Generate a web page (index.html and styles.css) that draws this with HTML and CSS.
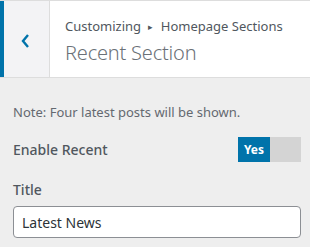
FILE: index.html
```html
<!DOCTYPE html>
<html lang="en">
  <head>
    <meta charset="UTF-8" />
    <title>Recent Section</title>
    <link rel="stylesheet" href="styles.css">
  </head>
  <body>
    <header class="section-head">
      <button class="back-btn" aria-label="Back">
        <svg width="10" height="16" viewBox="0 0 10 16">
          <polyline points="8,2 3,8 8,14" fill="none" stroke="#0073aa" stroke-width="2.4" />
        </svg>
      </button>
      <div class="section-title">
        <span class="crumb">Customizing <span class="sep">&#9656;</span> Homepage Sections</span>
        <h3>Recent Section</h3>
      </div>
    </header>

    <div class="controls">
      <p class="note">Note: Four latest posts will be shown.</p>

      <div class="row">
        <span class="label">Enable Recent</span>
        <div class="toggle">
          <span class="on">Yes</span>
          <span class="off"></span>
        </div>
      </div>

      <label class="label field-label" for="title">Title</label>
      <input id="title" class="text-input" type="text" value="Latest News" />
    </div>
  </body>
</html>
```

FILE: styles.css
```css
* {
  margin: 0;
  padding: 0;
  box-sizing: border-box;
}
body {
  font-family: "Noto Sans", "Open Sans", sans-serif;
  background-color: #eeeeee;
  color: #50575e;
}
.section-head {
  display: flex;
  height: 78px;
  background-color: #ffffff;
  border-top: 1px solid #dddddd;
  border-bottom: 1px solid #dddddd;
}
.back-btn {
  width: 50px;
  border: none;
  border-left: 4px solid #0073aa;
  border-right: 1px solid #dddddd;
  background-color: #f3f3f5;
  display: flex;
  align-items: center;
  justify-content: center;
  padding: 3px 4px 0 0;
}
.section-title {
  padding: 15px 0 0 15px;
}
.crumb {
  display: block;
  font-size: 13px;
  line-height: 20px;
  color: #50575e;
}
.crumb .sep {
  font-size: 9px;
  margin: 0 4px;
  vertical-align: 1px;
}
.section-title h3 {
  font-size: 20px;
  font-weight: 300;
  line-height: 26px;
  color: #6b7177;
  margin-top: 3px;
  letter-spacing: -0.2px;
}
.controls {
  padding: 25px 9px 0 13px;
}
.note {
  font-size: 13px;
  line-height: 18px;
  color: #646970;
}
.row {
  display: flex;
  justify-content: space-between;
  align-items: center;
  margin-top: 16px;
}
.label {
  font-size: 14px;
  font-weight: 500;
  color: #50575e;
}
.toggle {
  display: flex;
  width: 63px;
  height: 25px;
}
.toggle .on {
  width: 32px;
  background-color: #0073aa;
  color: #ffffff;
  font-size: 12px;
  font-weight: 700;
  display: flex;
  align-items: center;
  justify-content: center;
}
.toggle .off {
  flex: 1;
  background-color: #d4d4d4;
}
.field-label {
  display: block;
  margin-top: 18px;
  line-height: 20px;
}
.text-input {
  display: block;
  width: 100%;
  height: 32px;
  margin-top: 6px;
  padding: 0 8px;
  border: 1px solid #8c8f94;
  border-radius: 4px;
  background-color: #ffffff;
  font-family: inherit;
  font-size: 14px;
  color: #2c3338;
}
```
